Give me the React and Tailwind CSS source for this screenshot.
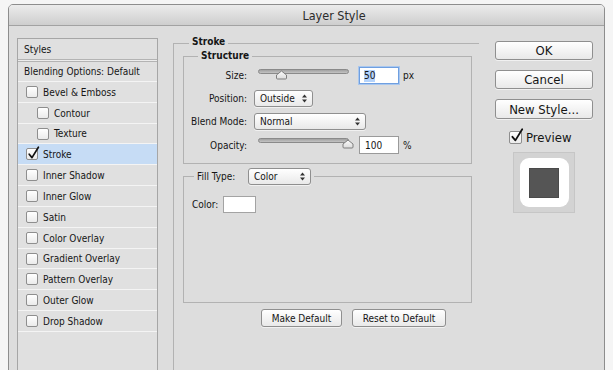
import React from "react";

function Check({ checked }) {
  return (
    <div className="relative w-[12px] h-[12px] shrink-0 rounded-[2px] border border-[#8e8e8e] bg-gradient-to-b from-white to-[#ebebeb]">
      {checked && (
        <svg className="absolute left-[0px] top-[-3px]" width="13" height="14" viewBox="0 0 13 14">
          <path d="M2.2 8.2 L5 11.6 L11.4 1.2" fill="none" stroke="#111" strokeWidth="1.7" strokeLinecap="round" strokeLinejoin="round" />
        </svg>
      )}
    </div>
  );
}

function Arrows() {
  return (
    <svg width="5" height="9" viewBox="0 0 5 9">
      <path d="M0 3.5 L2.5 0.5 L5 3.5 Z" fill="#333" />
      <path d="M0 5.5 L2.5 8.5 L5 5.5 Z" fill="#333" />
    </svg>
  );
}

function Slider({ cx }) {
  return (
    <svg width="96" height="12" viewBox="0 0 96 12" className="self-start mt-[2px] ml-[11px]">
      <defs>
        <linearGradient id="trk" x1="0" y1="0" x2="0" y2="1">
          <stop offset="0" stopColor="#9b9b9b" />
          <stop offset="1" stopColor="#c9c9c9" />
        </linearGradient>
        <linearGradient id="thm" x1="0" y1="0" x2="0" y2="1">
          <stop offset="0" stopColor="#fbfbfb" />
          <stop offset="1" stopColor="#dcdcdc" />
        </linearGradient>
      </defs>
      <rect x="0.5" y="0.5" width="90" height="4" rx="2" fill="url(#trk)" stroke="#8a8a8a" strokeWidth="1" />
      <path
        d={`M${cx} 2 L${cx + 5} 6 L${cx + 5} 9 Q${cx + 5} 10 ${cx + 4} 10 L${cx - 4} 10 Q${cx - 5} 10 ${cx - 5} 9 L${cx - 5} 6 Z`}
        fill="url(#thm)"
        stroke="#7e7e7e"
        strokeWidth="1"
      />
    </svg>
  );
}

const rows = [
  { t: "Bevel & Emboss" },
  { t: "Contour", ind: true },
  { t: "Texture", ind: true, short: true },
  { t: "Stroke", on: true },
  { t: "Inner Shadow" },
  { t: "Inner Glow" },
  { t: "Satin" },
  { t: "Color Overlay" },
  { t: "Gradient Overlay", short: true },
  { t: "Pattern Overlay" },
  { t: "Outer Glow" },
  { t: "Drop Shadow" },
];

const btn =
  "flex items-center justify-center rounded-[3px] border border-[#8f8f8f] bg-gradient-to-b from-white to-[#e9e9e9] shadow-[0_1px_0_rgba(255,255,255,0.6)]";

export default function App() {
  return (
    <div className="w-[613px] h-[370px] overflow-hidden bg-[#f5f5f5] pl-[8px] pt-[4px] text-[#151515] [font-family:'DejaVu_Sans_Condensed','Liberation_Sans',Arial,sans-serif]">
      <div className="w-[597px] h-[380px] flex flex-col overflow-hidden rounded-t-[5px] border border-[#8d8d8d] bg-[#dddddd]">
        {/* title bar */}
        <div className="h-[21px] shrink-0 flex items-center justify-center pl-[55px] border-b border-[#a2a2a2] bg-gradient-to-b from-[#ececec] to-[#cecece] text-[12.5px] leading-[15px] text-[#2b2b2b]">
          Layer Style
        </div>

        {/* body */}
        <div className="flex pl-[8px] pt-[12px]">
          {/* left list */}
          <div className="w-[141px] h-[345px] shrink-0 border border-[#a6a6a6] bg-[#e0e0e0] text-[10px] leading-[13px]">
            <div className="h-[21px] flex items-center pl-[6px] border-b border-[#b3b3b3]">Styles</div>
            <div className="h-[1px] bg-[#ececec]" />
            <div className="h-[21px] flex items-center pl-[6px] border-t border-b border-t-[#b3b3b3] border-b-[#f4f4f4]">
              Blending Options: Default
            </div>
            {rows.map((r) => (
              <div
                key={r.t}
                className={
                  "flex items-center border-b border-[#f4f4f4] " +
                  (r.short ? "h-[20px] " : "h-[21px] ") +
                  (r.ind ? "pl-[19px] " : "pl-[8px] ") +
                  (r.on ? "bg-[#c6dcf5]" : "")
                }
              >
                <Check checked={r.on} />
                <span className="ml-[5px]">{r.t}</span>
              </div>
            ))}
          </div>

          {/* middle */}
          <div className="ml-[15px] mt-[5px] w-[306px] h-[340px] shrink-0 flex flex-col border-l border-t border-[#b2b2b2] text-[10px] leading-[13px]">
            <div className="w-fit ml-[15px] -mt-[9px] h-[13px] px-[3px] leading-[13px] font-bold bg-[#dddddd]">Stroke</div>

            {/* Structure */}
            <div className="ml-[9px] mt-[8px] w-[289px] h-[108px] border border-[#b2b2b2] flex flex-col">
              <div className="w-fit ml-[14px] -mt-[8px] h-[13px] px-[3px] leading-[13px] font-bold bg-[#dddddd]">Structure</div>

              <div className="mt-[5px] h-[17px] flex items-center">
                <div className="w-[63px] text-right">Size:</div>
                <Slider cx={23.5} />
                <div className="ml-[5px] w-[40px] h-[17px] flex items-center pl-[4px] bg-white border border-[#6f9fe0] shadow-[0_0_0_1px_#a9c7ee]">
                  <span className="bg-[#b4d3fb] leading-[12px]">50</span>
                </div>
                <span className="ml-[4px]">px</span>
              </div>

              <div className="mt-[6px] h-[17px] flex items-center">
                <div className="w-[63px] text-right">Position:</div>
                <div className={"ml-[7px] w-[59px] h-[17px] justify-between! px-[5px] " + btn}>
                  <span>Outside</span>
                  <Arrows />
                </div>
              </div>

              <div className="mt-[6px] h-[17px] flex items-center">
                <div className="w-[63px] text-right">Blend Mode:</div>
                <div className={"ml-[7px] w-[112px] h-[17px] justify-between! px-[5px] " + btn}>
                  <span>Normal</span>
                  <Arrows />
                </div>
              </div>

              <div className="mt-[6px] h-[18px] flex items-center">
                <div className="w-[63px] text-right">Opacity:</div>
                <Slider cx={90} />
                <div className="ml-[5px] w-[40px] h-[18px] flex items-center pl-[5px] bg-white border border-[#9a9a9a]">100</div>
                <span className="ml-[4px]">%</span>
              </div>
            </div>

            {/* Fill */}
            <div className="ml-[9px] mt-[12px] w-[289px] h-[127px] border border-[#b2b2b2] flex flex-col">
              <div className="w-fit ml-[10px] -mt-[9px] h-[17px] px-[3px] flex items-center bg-[#dddddd]">
                <span className="w-[51px]">Fill Type:</span>
                <div className={"w-[63px] h-[17px] justify-between! px-[5px] " + btn}>
                  <span>Color</span>
                  <Arrows />
                </div>
              </div>
              <div className="mt-[11px] ml-[8px] flex items-center">
                <span className="w-[31px]">Color:</span>
                <div className="w-[33px] h-[17px] bg-white border border-[#a3a3a3]" />
              </div>
            </div>

            <div className="mt-[6px] ml-[87px] flex gap-[10px]">
              <div className={"w-[81px] h-[18px] " + btn}>Make Default</div>
              <div className={"w-[94px] h-[18px] " + btn}>Reset to Default</div>
            </div>
          </div>

          {/* right */}
          <div className="ml-[16px] mt-[3px] w-[98px] flex flex-col text-[13px] leading-[15px]">
            <div className={"h-[19px] border-[#5f5f5f] " + btn}>OK</div>
            <div className={"mt-[10px] h-[19px] " + btn}>Cancel</div>
            <div className={"mt-[10px] h-[20px] " + btn}>New Style...</div>
            <div className="mt-[11px] ml-[14px] h-[15px] flex items-center">
              <div className="relative w-[13px] h-[13px] rounded-[2px] border border-[#8e8e8e] bg-gradient-to-b from-white to-[#ebebeb]">
                <svg className="absolute left-[0px] top-[-4px]" width="14" height="15" viewBox="0 0 14 15">
                  <path d="M2.4 8.8 L5.4 12.4 L12.2 1.3" fill="none" stroke="#111" strokeWidth="1.8" strokeLinecap="round" strokeLinejoin="round" />
                </svg>
              </div>
              <span className="ml-[4px]">Preview</span>
            </div>
            <div className="mt-[7px] ml-[18px] w-[62px] h-[61px] border border-[#c6c6c6] bg-[#d3d3d3] flex items-center justify-center">
              <div className="w-[49px] h-[49px] rounded-[9px] bg-white flex items-center justify-center">
                <div className="w-[30px] h-[30px] bg-[#555555] border border-[#4a4a4a]" />
              </div>
            </div>
          </div>
        </div>
      </div>
    </div>
  );
}
